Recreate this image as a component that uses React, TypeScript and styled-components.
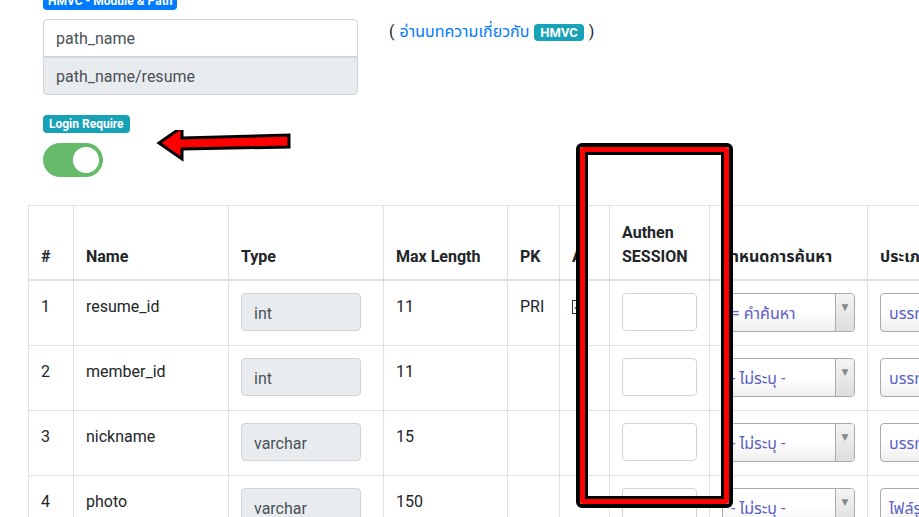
import styled, { createGlobalStyle } from "styled-components";

const GlobalStyle = createGlobalStyle`
  html, body {
    margin: 0;
    padding: 0;
    background: #fff;
    overflow: hidden;
  }
  body {
    font-family: Roboto, "Noto Sans Thai", "Noto Sans", "DejaVu Sans", sans-serif;
    font-size: 16px;
    color: #212529;
  }
`;

interface Field {
  id: number;
  name: string;
  type: string;
  length: string;
  pk?: string;
  ai?: boolean;
  search: string;
  kind: string;
}

const fields: Field[] = [
  { id: 1, name: "resume_id", type: "int", length: "11", pk: "PRI", ai: true, search: "= คำค้นหา", kind: "บรรทัดเดียว" },
  { id: 2, name: "member_id", type: "int", length: "11", search: "- ไม่ระบุ -", kind: "บรรทัดเดียว" },
  { id: 3, name: "nickname", type: "varchar", length: "15", search: "- ไม่ระบุ -", kind: "บรรทัดเดียว" },
  { id: 4, name: "photo", type: "varchar", length: "150", search: "- ไม่ระบุ -", kind: "ไฟล์รูปภาพ" },
];

const Page = styled.div`
  position: relative;
  padding-left: 28px;
  margin-top: -10px;
  width: 1200px;
`;

const FormSection = styled.div`
  padding-left: 15px;
`;

const Badge = styled.span<{ $bg: string }>`
  display: inline-block;
  background: ${(p) => p.$bg};
  color: #fff;
  font-size: 12px;
  font-weight: 700;
  line-height: 12px;
  padding: 3px 5px;
  border-radius: 4px;
  white-space: nowrap;
`;

const PathRow = styled.div`
  display: flex;
  align-items: flex-start;
  margin-top: 9px;
`;

const InputGroup = styled.div`
  display: flex;
  flex-direction: column;
  width: 315px;
`;

const TextInput = styled.div<{ $readonly?: boolean }>`
  height: 38px;
  box-sizing: border-box;
  border: 1px solid #ced4da;
  background: ${(p) => (p.$readonly ? "#e9ecef" : "#fff")};
  color: #495057;
  font-size: 16px;
  line-height: 38px;
  padding: 0 12px;
  border-radius: ${(p) => (p.$readonly ? "0 0 4px 4px" : "4px 4px 0 0")};
`;

const Hint = styled.div`
  margin-left: 31px;
  margin-top: 3px;
  font-size: 16px;
  line-height: 20px;
  display: flex;
  align-items: center;
  gap: 5px;
  color: #212529;
`;

const HintLink = styled.span`
  color: #007bff;
`;

const HintBadge = styled(Badge)`
  font-size: 13px;
  line-height: 13px;
  padding: 2px 6px;
`;

const LoginBadge = styled(Badge)`
  margin-top: 20px;
  padding: 3px 6px;
`;

const SwitchTrack = styled.div`
  margin-top: 10px;
  width: 60px;
  height: 34px;
  border-radius: 17px;
  background: #66bb6a;
  display: flex;
  align-items: center;
  justify-content: flex-end;
  padding: 0 4px;
  box-sizing: border-box;
`;

const SwitchKnob = styled.div`
  width: 26px;
  height: 26px;
  border-radius: 50%;
  background: #fff;
`;

const Table = styled.table`
  margin-top: 28px;
  border-collapse: collapse;
  table-layout: fixed;
  width: 1060px;
  font-size: 16px;
`;

const Th = styled.th<{ $w: number }>`
  box-sizing: border-box;
  width: ${(p) => p.$w}px;
  height: 74px;
  text-align: left;
  vertical-align: bottom;
  font-weight: 700;
  line-height: 24px;
  padding: 12px 12px 10px;
  border: 1px solid #dee2e6;
  border-bottom: 2px solid #dee2e6;
  white-space: nowrap;
  overflow: hidden;
`;

const Td = styled.td`
  vertical-align: top;
  line-height: 28px;
  padding: 12px;
  height: 40px;
  border: 1px solid #dee2e6;
  white-space: nowrap;
  overflow: hidden;
`;

const TypeBox = styled.div`
  width: 120px;
  height: 38px;
  box-sizing: border-box;
  border: 1px solid #ced4da;
  border-radius: 4px;
  background: #e9ecef;
  color: #495057;
  padding: 0 12px;
  line-height: 40px;
`;

const SessionBox = styled.div`
  width: 75px;
  height: 38px;
  box-sizing: border-box;
  border: 1px solid #ced4da;
  border-radius: 4px;
  background: #fff;
`;

const Check = styled.div`
  width: 9px;
  height: 12px;
  margin-top: 7px;
  border: 1px solid #333;
  font-size: 10px;
  line-height: 12px;
  color: #444;
  text-align: center;
`;

const Select = styled.div<{ $open?: boolean }>`
  display: flex;
  width: ${(p) => (p.$open ? 200 : 133)}px;
  height: 39px;
  box-sizing: border-box;
  border: 1px solid #aaa;
  border-radius: 4px;
  background: linear-gradient(#fff 50%, #eee);
  color: #5b5fc7;
  font-size: 16px;
  overflow: hidden;
`;

const SelectText = styled.span`
  flex: 1;
  padding-left: 8px;
  line-height: 40px;
  white-space: nowrap;
`;

const SelectArrow = styled.span`
  width: 18px;
  border-left: 1px solid #aaa;
  background: linear-gradient(#f4f4f4, #ddd);
  color: #888;
  font-size: 9px;
  text-align: center;
  line-height: 26px;
`;

const Highlight = styled.div`
  position: absolute;
  left: 576px;
  top: 153px;
  width: 157px;
  height: 365px;
  box-sizing: border-box;
  border: 4px solid #000;
  border-radius: 6px;
  pointer-events: none;
`;

const HighlightRed = styled.div`
  height: 100%;
  box-sizing: border-box;
  border: 5px solid #ff0000;
  border-radius: 3px;
`;

const HighlightInner = styled.div`
  height: 100%;
  box-sizing: border-box;
  border: 3px solid #000;
`;

const Arrow = styled.svg`
  position: absolute;
  left: 150px;
  top: 140px;
`;

const columns: [string, number][] = [
  ["#", 45],
  ["Name", 155],
  ["Type", 155],
  ["Max Length", 124],
  ["PK", 52],
  ["AI", 50],
  ["Authen SESSION", 100],
  ["กำหนดการค้นหา", 158],
  ["ประเภท Input", 221],
];

export default function App() {
  return (
    <Page>
      <GlobalStyle />
      <FormSection>
        <Badge $bg="#007bff">HMVC - Module &amp; Path</Badge>
        <PathRow>
          <InputGroup>
            <TextInput>path_name</TextInput>
            <TextInput $readonly>path_name/resume</TextInput>
          </InputGroup>
          <Hint>
            (<HintLink>อ่านบทความเกี่ยวกับ</HintLink>
            <HintBadge $bg="#17a2b8">HMVC</HintBadge>)
          </Hint>
        </PathRow>
        <LoginBadge $bg="#17a2b8">Login Require</LoginBadge>
        <SwitchTrack>
          <SwitchKnob />
        </SwitchTrack>
      </FormSection>

      <Table>
        <thead>
          <tr>
            {columns.map(([label, w]) => (
              <Th key={label} $w={w}>
                {label === "Authen SESSION" ? (
                  <>
                    Authen
                    <br />
                    SESSION
                  </>
                ) : (
                  label
                )}
              </Th>
            ))}
          </tr>
        </thead>
        <tbody>
          {fields.map((f) => (
            <tr key={f.id}>
              <Td>{f.id}</Td>
              <Td>{f.name}</Td>
              <Td>
                <TypeBox>{f.type}</TypeBox>
              </Td>
              <Td>{f.length}</Td>
              <Td>{f.pk}</Td>
              <Td>{f.ai && <Check>✓</Check>}</Td>
              <Td>
                <SessionBox />
              </Td>
              <Td>
                <Select>
                  <SelectText>{f.search}</SelectText>
                  <SelectArrow>▼</SelectArrow>
                </Select>
              </Td>
              <Td>
                <Select $open>
                  <SelectText>{f.kind}</SelectText>
                </Select>
              </Td>
            </tr>
          ))}
        </tbody>
      </Table>

      <Arrow width="150" height="40" viewBox="150 140 150 40">
        <polygon
          points="159,153 182,137 182,148 289,145 289,157 182,159 182,169"
          fill="#ff0000"
          stroke="#000"
          strokeWidth="3"
          strokeLinejoin="miter"
        />
      </Arrow>
      <Highlight>
        <HighlightRed>
          <HighlightInner />
        </HighlightRed>
      </Highlight>
    </Page>
  );
}
